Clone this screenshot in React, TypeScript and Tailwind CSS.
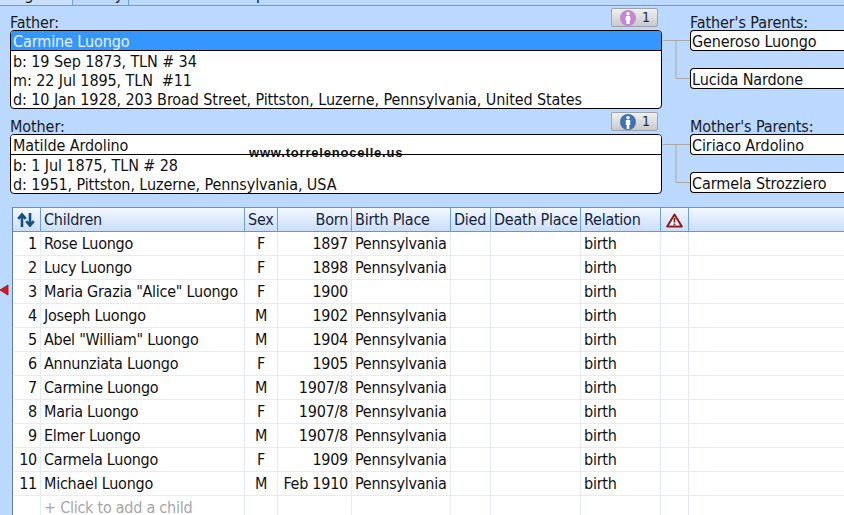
import React from "react";

const font = "font-['DejaVu_Sans_Condensed','DejaVu_Sans',sans-serif] font-stretch-condensed text-[16px] tracking-[-0.095px]";

const children = [
  ["1", "Rose Luongo", "F", "1897", "Pennsylvania"],
  ["2", "Lucy Luongo", "F", "1898", "Pennsylvania"],
  ["3", 'Maria Grazia "Alice" Luongo', "F", "1900", ""],
  ["4", "Joseph Luongo", "M", "1902", "Pennsylvania"],
  ["5", 'Abel "William" Luongo', "M", "1904", "Pennsylvania"],
  ["6", "Annunziata Luongo", "F", "1905", "Pennsylvania"],
  ["7", "Carmine Luongo", "M", "1907/8", "Pennsylvania"],
  ["8", "Maria Luongo", "F", "1907/8", "Pennsylvania"],
  ["9", "Elmer Luongo", "M", "1907/8", "Pennsylvania"],
  ["10", "Carmela Luongo", "F", "1909", "Pennsylvania"],
  ["11", "Michael Luongo", "M", "Feb 1910", "Pennsylvania"],
];

const gridCols = "grid grid-cols-[28px_204px_33px_74px_99px_40px_90px_80px_28px_1fr]";

const PersonBadge = ({ female }: { female?: boolean }) => (
  <div className="flex h-[19px] w-[47px] items-center justify-center gap-[6px] rounded-[2px] border border-[#9aa3ad] bg-gradient-to-b from-[#f1f1f1] to-[#c9c9c9] pl-[1px]">
    <svg width="16" height="16" viewBox="0 0 16 16">
      <circle cx="8" cy="8" r="8" fill={female ? "#c585cf" : "#3d73b4"} />
      <circle cx="8" cy="3.8" r="1.8" fill="#fff" />
      {female ? (
        <path d="M6 6h4l.6 4-1 .6V14H6.4v-3.4l-1-.6z" fill="#fff" />
      ) : (
        <path d="M5.8 6h4.4v5H9.3v4H6.7v-4h-.9z" fill="#fff" />
      )}
    </svg>
    <span className="text-[14px] text-[#1c2b4a]">1</span>
  </div>
);

const ParentSlot = ({ name }: { name: string }) => (
  <div className="flex h-[21px] items-center rounded-l-[4px] border-y border-l border-black bg-white pl-[1px] pt-[2px] leading-none">
    {name}
  </div>
);

const Connector = () => (
  <svg width="28" height="50" viewBox="0 0 28 50" className="mt-[10px] shrink-0">
    <path d="M1 .5H28M14 .5V38.5H28" fill="none" stroke="#a9a9a2" />
  </svg>
);

type FamilyProps = {
  label: string;
  parentsLabel: string;
  name: string;
  selected?: boolean;
  female?: boolean;
  lines: string[];
  parents: [string, string];
};

const Family = ({ label, parentsLabel, name, selected, female, lines, parents }: FamilyProps) => (
  <div className="flex pl-[10px]">
    <div className="w-[652px] shrink-0">
      <div className="flex h-[24px] items-end justify-between pr-[4px]">
        <span className="leading-[14px] text-[#1a1a1a]">{label}</span>
        <div className="mb-[3px]">
          <PersonBadge female={female} />
        </div>
      </div>
      <div className="overflow-hidden rounded-[4px] border border-black bg-white">
        <div
          className={`flex h-[20px] items-center border-b border-black pl-[2px] pt-[2px] ${
            selected ? "bg-[#3496fe] text-[#eaf3ff]" : "bg-white"
          }`}
        >
          {name}
        </div>
        {lines.map((line) => (
          <div key={line} className="flex h-[19px] items-center whitespace-pre pl-[2px] pt-[2px]">
            {line}
          </div>
        ))}
      </div>
    </div>
    <div className="flex">
      <div className="pt-[24px]">
        <Connector />
      </div>
      <div className="w-[160px]">
        <div className="flex h-[24px] items-end text-[#1a1a1a]">
          <span className="leading-[14px]">{parentsLabel}</span>
        </div>
        <ParentSlot name={parents[0]} />
        <div className="mt-[17px]">
          <ParentSlot name={parents[1]} />
        </div>
      </div>
    </div>
  </div>
);

const HeaderCell = ({ children, right }: { children?: React.ReactNode; right?: boolean }) => (
  <div
    className={`flex items-center whitespace-nowrap border-r border-[#6f9fdb] px-[3px] ${right ? "justify-end" : ""}`}
  >
    {children}
  </div>
);

const Cell = ({ children, right, center }: { children?: React.ReactNode; right?: boolean; center?: boolean }) => (
  <div
    className={`flex items-center overflow-hidden whitespace-nowrap border-r border-[#e2ecfb] px-[3px] ${
      right ? "justify-end" : center ? "justify-center" : ""
    }`}
  >
    {children}
  </div>
);

export default function App() {
  return (
    <div className={`relative h-[515px] w-[844px] overflow-hidden bg-[#bbd8ff] text-[#111] ${font}`}>
      {/* tab strip, only the descenders of the labels are in view */}
      <div className="flex h-[6px] overflow-hidden border-b border-[#6f9ad2] leading-[18px]">
        <div className="flex h-[6px] w-[73px] justify-end border-r border-[#6f9ad2] bg-[#c9dffc] pr-[30px]">
          <span className="-mt-[14px]">Page</span>
        </div>
        <div className="z-10 flex h-[6px] w-[56px] justify-center border-r border-[#6f9ad2] bg-[#bbd8ff]">
          <span className="-mt-[14px]">Family</span>
        </div>
        <div className="flex h-[5px] pl-[106px]">
          <span className="-mt-[14px]">Map</span>
        </div>
      </div>

      <Family
        label="Father:"
        parentsLabel="Father's Parents:"
        name="Carmine Luongo"
        selected
        female
        lines={[
          "b: 19 Sep 1873, TLN # 34",
          "m: 22 Jul 1895, TLN  #11",
          "d: 10 Jan 1928, 203 Broad Street, Pittston, Luzerne, Pennsylvania, United States",
        ]}
        parents={["Generoso Luongo", "Lucida Nardone"]}
      />
      <div className="h-[1px]" />
      <Family
        label="Mother:"
        parentsLabel="Mother's Parents:"
        name="Matilde Ardolino"
        lines={["b: 1 Jul 1875, TLN # 28", "d: 1951, Pittston, Luzerne, Pennsylvania, USA"]}
        parents={["Ciriaco Ardolino", "Carmela Strozziero"]}
      />

      {/* children table */}
      <div className="relative ml-[12px] mt-[13px] border-l border-[#5f7ea6] bg-white tracking-[-0.25px]">
        <div
          className={`${gridCols} h-[25px] border-y border-[#6f93c4] bg-gradient-to-b from-[#f4f8ff] to-[#c9defa] text-[#14233c]`}
        >
          <HeaderCell>
            <svg width="18" height="16" viewBox="0 0 18 16" className="ml-[1px] shrink-0">
              <path
                d="M5 15V3M1.2 6.8 5 2.5l3.8 4.3M13 1v12M9.2 9.2l3.8 4.3 3.8-4.3"
                fill="none"
                stroke="#14507f"
                strokeWidth="2.6"
              />
            </svg>
          </HeaderCell>
          <HeaderCell>Children</HeaderCell>
          <HeaderCell>Sex</HeaderCell>
          <HeaderCell right>Born</HeaderCell>
          <HeaderCell>Birth Place</HeaderCell>
          <HeaderCell>Died</HeaderCell>
          <HeaderCell>Death Place</HeaderCell>
          <HeaderCell>Relation</HeaderCell>
          <div className="flex items-center justify-center border-r border-[#6f9fdb]">
            <svg width="17" height="15" viewBox="0 0 17 15">
              <path d="M8.5 1.5 15.8 13.5H1.2z" fill="#fff" stroke="#8c1a1f" strokeWidth="2" strokeLinejoin="round" />
              <path d="M8.5 5v4.5M8.5 10.6v1.6" stroke="#8c1a1f" strokeWidth="1.8" />
            </svg>
          </div>
          <div />
        </div>
        {children.map((row) => (
          <div key={row[0]} className={`${gridCols} h-[24px] border-b border-[#e2ecfb]`}>
            <Cell right>{row[0]}</Cell>
            <Cell>{row[1]}</Cell>
            <Cell center>{row[2]}</Cell>
            <Cell right>{row[3]}</Cell>
            <Cell>{row[4]}</Cell>
            <Cell />
            <Cell />
            <Cell>birth</Cell>
            <Cell />
            <div />
          </div>
        ))}
        <div className={`${gridCols} h-[24px] text-[#a6a6a6]`}>
          <Cell />
          <Cell>+ Click to add a child</Cell>
          <Cell />
          <Cell />
          <Cell />
          <Cell />
          <Cell />
          <Cell />
          <Cell />
          <div />
        </div>
      </div>

      {/* current child marker */}
      <svg width="9" height="12" viewBox="0 0 9 12" className="absolute left-0 top-[284px]">
        <path d="M0 6 8 1v10z" fill="#e2141c" stroke="#8e1116" strokeWidth="0.8" />
      </svg>

      {/* watermark stamped over the picture */}
      <div className="absolute left-[249px] top-[143px] font-['Liberation_Sans',sans-serif] text-[13px] font-bold tracking-[0.8px] text-[#111]">
        www.torrelenocelle.us
      </div>
    </div>
  );
}
